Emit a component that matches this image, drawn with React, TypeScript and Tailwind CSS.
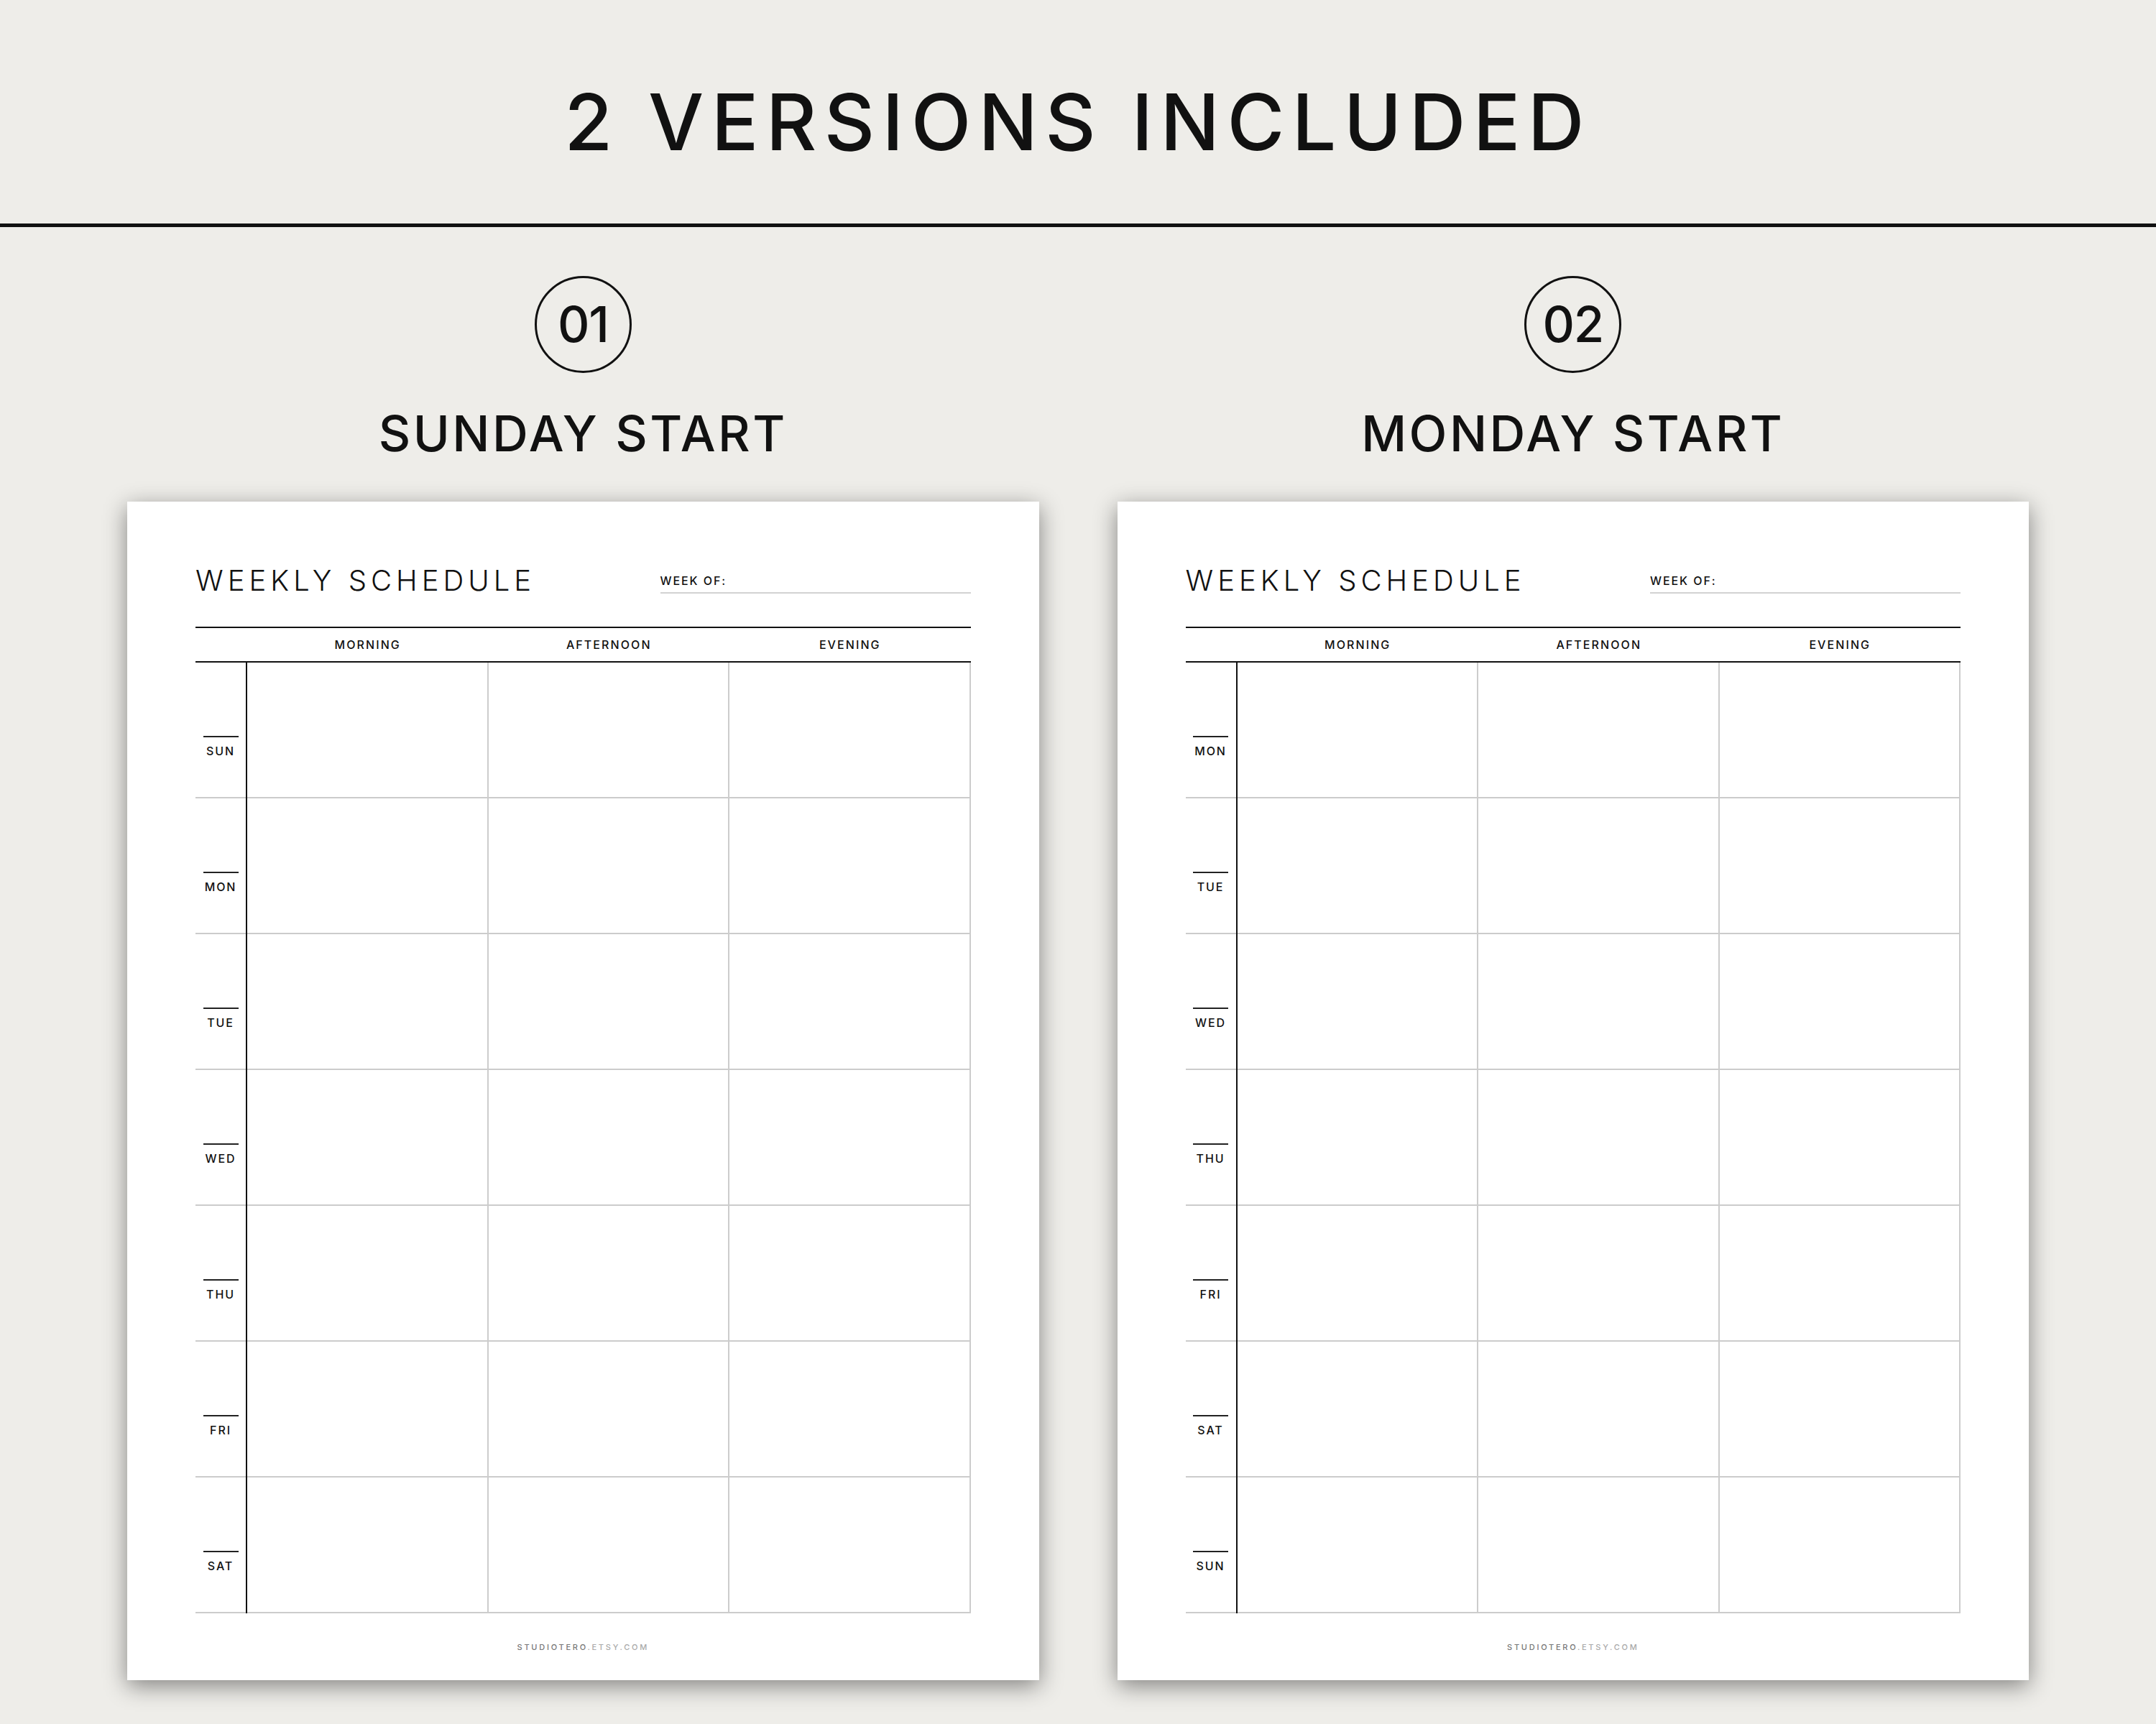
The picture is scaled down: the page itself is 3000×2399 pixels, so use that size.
const sundayWeek = ["SUN", "MON", "TUE", "WED", "THU", "FRI", "SAT"]
const mondayWeek = ["MON", "TUE", "WED", "THU", "FRI", "SAT", "SUN"]
const periods = ["MORNING", "AFTERNOON", "EVENING"]

const Schedule = ({ days }: { days: string[] }) => {
  return (
    <div className="bg-white h-[1640px] px-[95px] pt-[90px] flex flex-col shadow-[0_8px_30px_rgba(0,0,0,0.45)]">
      <div className="flex items-end justify-between">
        <h2 className="text-[40px] leading-none font-light tracking-[0.15em] text-[#111]">WEEKLY SCHEDULE</h2>
        <div className="w-[432px] mb-[2px] pb-[8px] border-b-2 border-[#d2d2d2] text-[16px] leading-none font-medium tracking-[0.12em] text-[#111]">
          WEEK OF:
        </div>
      </div>

      <div className="mt-[44px] h-[50px] border-y-2 border-[#111] grid grid-cols-[72px_1fr_1fr_1fr] items-center">
        <div />
        {periods.map((p) => (
          <p key={p} className="text-center text-[16px] leading-none font-medium tracking-[0.13em] text-[#111]">
            {p}
          </p>
        ))}
      </div>

      <div className="flex">
        <div className="w-[70px] flex flex-col">
          {days.map((d) => (
            <div key={d} className="h-[189px] border-b-2 border-[#cccccc] flex flex-col items-center pt-[102px]">
              <div className="w-[49px] h-[2px] bg-[#222]" />
              <span className="mt-[11px] text-[16px] leading-none font-medium tracking-[0.12em] text-[#111]">{d}</span>
            </div>
          ))}
        </div>
        <div className="flex-1 border-l-2 border-[#111] grid grid-cols-3 grid-rows-[repeat(7,189px)]">
          {days.flatMap((d) =>
            periods.map((p) => <div key={d + p} className="border-b-2 border-r-2 border-[#cccccc]" />)
          )}
        </div>
      </div>

      <p className="mt-[42px] text-center text-[11px] leading-none font-medium tracking-[0.25em]">
        <span className="text-[#777]">STUDIOTERO</span>
        <span className="text-[#aaa]">.ETSY.COM</span>
      </p>
    </div>
  )
}

const Version = ({ num, label, days }: { num: string; label: string; days: string[] }) => {
  return (
    <div className="flex flex-col items-center">
      <div className="w-[135px] h-[135px] rounded-full border-[3px] border-[#111] flex items-center justify-center">
        <span className="text-[69px] leading-none tracking-[-0.02em] font-medium text-[#111]">{num}</span>
      </div>
      <h3 className="mt-[50px] text-[69px] leading-none font-medium tracking-[0.05em] text-[#111]">{label}</h3>
      <div className="mt-[60px] w-full">
        <Schedule days={days} />
      </div>
    </div>
  )
}

export default function App() {
  return (
    <div className="min-h-[2399px] w-[3000px] bg-[#eeede9] font-['Inter','Liberation_Sans',sans-serif]">
      <header className="h-[311px] pt-[115px]">
        <h1 className="text-center text-[109px] leading-none font-medium tracking-[0.095em] text-[#111]">2 VERSIONS INCLUDED</h1>
      </header>
      <div className="h-[5px] bg-[#111]" />
      <main className="pt-[68px] px-[177px] grid grid-cols-2 gap-x-[109px]">
        <Version num="01" label="SUNDAY START" days={sundayWeek} />
        <Version num="02" label="MONDAY START" days={mondayWeek} />
      </main>
    </div>
  )
}
